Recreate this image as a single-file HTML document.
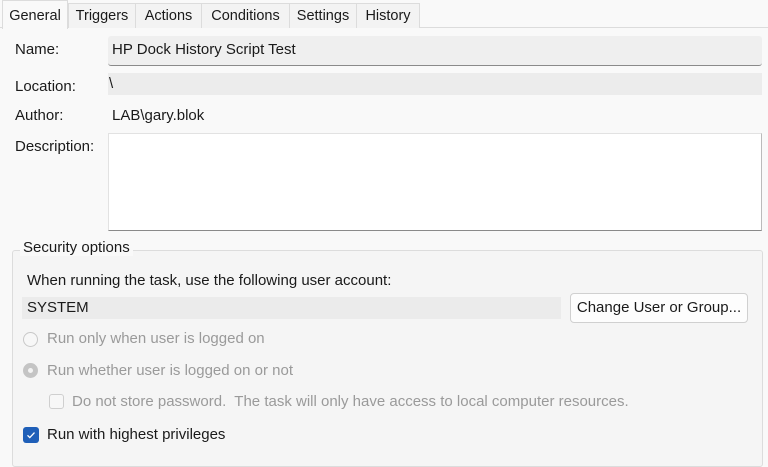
<!DOCTYPE html>
<html><head><style>
body{margin:0;width:768px;height:459px;background:#f9f9f9;font-family:"Liberation Sans",sans-serif;font-size:15px;color:#1a1a1a;position:relative;overflow:hidden}
.a{position:absolute;white-space:nowrap}
.tab{position:absolute;top:3px;height:24px;line-height:24px;text-align:center;border:1px solid #dcdcdc;border-bottom:none;background:#f3f3f3;font-size:14.5px}
.g{color:#9a9a9a}
</style></head><body>
<div class="a" style="left:0;top:27px;width:768px;height:1px;background:#dcdcdc"></div>
<div class="tab" style="left:2px;top:0;height:28px;width:64px;background:#f9f9f9;line-height:30px">General</div>
<div class="tab" style="left:68px;width:66px">Triggers</div>
<div class="tab" style="left:135px;width:65px">Actions</div>
<div class="tab" style="left:201px;width:87px">Conditions</div>
<div class="tab" style="left:289px;width:66px">Settings</div>
<div class="tab" style="left:356px;width:62px">History</div>

<div class="a" style="left:15px;top:41px">Name:</div>
<div class="a" style="left:108px;top:36px;width:654px;height:29px;background:#efefef;border-bottom:1px solid #8a8a8a;border-radius:3px"></div>
<div class="a" style="left:112px;top:41px">HP Dock History Script Test</div>
<div class="a" style="left:15px;top:78px">Location:</div>
<div class="a" style="left:108px;top:73px;width:654px;height:22px;background:#ececec"></div>
<div class="a" style="left:109px;top:75px">\</div>
<div class="a" style="left:15px;top:107px">Author:</div>
<div class="a" style="left:112px;top:107px">LAB\gary.blok</div>
<div class="a" style="left:15px;top:138px">Description:</div>
<div class="a" style="left:108px;top:133px;width:652px;height:96px;background:#fff;border:1px solid #e2e2e2;border-bottom:1px solid #8a8a8a;border-right:1px solid #bbb"></div>

<div class="a" style="left:12px;top:250px;width:749px;height:215px;border:1px solid #dcdcdc;border-radius:3px;background:#f5f5f5"></div>
<div class="a" style="left:20px;top:239px;background:#f9f9f9;padding:0 3px">Security options</div>
<div class="a" style="left:27px;top:272px">When running the task, use the following user account:</div>
<div class="a" style="left:22px;top:297px;width:539px;height:22px;background:#ebebeb"></div>
<div class="a" style="left:27px;top:299px">SYSTEM</div>
<div class="a" style="left:570px;top:293px;width:176px;height:28px;background:#fdfdfd;border:1px solid #d0d0d0;border-radius:4px;text-align:center;line-height:28px">Change User or Group...</div>

<div class="a" style="left:23px;top:332px;width:13px;height:13px;border:1px solid #c8c8c8;border-radius:50%;background:#f7f7f7"></div>
<div class="a g" style="left:47px;top:330px">Run only when user is logged on</div>
<div class="a" style="left:23px;top:363px;width:15px;height:15px;border-radius:50%;background:#c4c4c4"></div>
<div class="a" style="left:28px;top:368px;width:5px;height:5px;border-radius:50%;background:#f3f3f3"></div>
<div class="a g" style="left:47px;top:362px">Run whether user is logged on or not</div>
<div class="a" style="left:49px;top:394px;width:13px;height:13px;border:1px solid #cfcfcf;border-radius:3px;background:#f7f7f7"></div>
<div class="a g" style="left:72px;top:393px">Do not store password.&nbsp; The task will only have access to local computer resources.</div>
<div class="a" style="left:23px;top:427px;width:16px;height:16px;border-radius:3px;background:#1f5fb8"></div>
<svg class="a" style="left:23px;top:427px" width="16" height="16"><path d="M4.5 8.3l2.3 2.3 4.7-5" fill="none" stroke="#fff" stroke-width="1.3"/></svg>
<div class="a" style="left:47px;top:426px">Run with highest privileges</div>
</body></html>
